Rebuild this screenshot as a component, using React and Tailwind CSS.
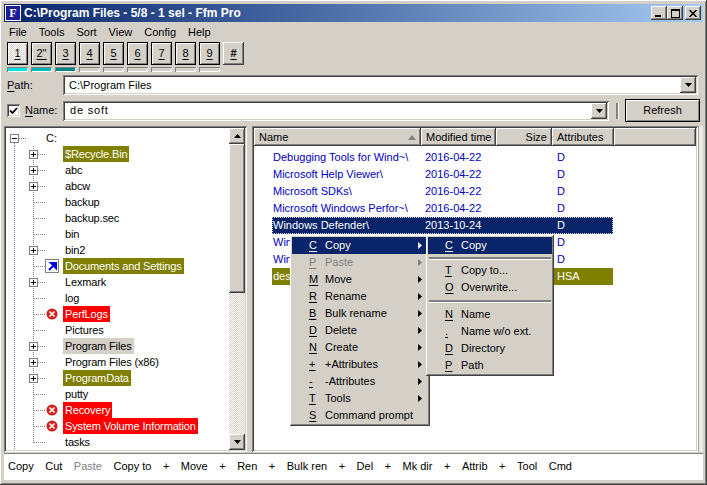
import React from "react";

const raised = "shadow-[inset_-1px_-1px_#404040,inset_1px_1px_#ffffff,inset_-2px_-2px_#808080,inset_2px_2px_#d4d0c8]";
const sunken = "shadow-[inset_1px_1px_#808080,inset_-1px_-1px_#ffffff,inset_2px_2px_#404040,inset_-2px_-2px_#d4d0c8]";
const dither = "repeating-conic-gradient(#ffffff 0% 25%, #d4d0c8 0% 50%)";

const U = ({ children }) => <span className="underline underline-offset-2">{children}</span>;

function ArrowDown() {
  return (
    <svg width="7" height="4" viewBox="0 0 7 4"><path d="M0 0h7L3.5 4z" fill="#000" /></svg>
  );
}

function ScrollBtn({ up, className = "" }) {
  return (
    <div className={`w-[16px] h-[16px] bg-[#d4d0c8] flex items-center justify-center ${raised} ${className}`}>
      <svg width="7" height="4" viewBox="0 0 7 4" className={up ? "rotate-180" : ""}><path d="M0 0h7L3.5 4z" fill="#000" /></svg>
    </div>
  );
}

const numbers = [
  ["1", "#00e4e4"], ["2\"", "#00b8b8"], ["3", "#008484"], ["4"], ["5"], ["6"], ["7"], ["8"], ["9"],
];

function NumBtn({ label, color, first }) {
  return (
    <div className="flex flex-col items-center w-[21px] gap-[2px]">
      <div
        className={`w-[21px] h-[23px] border border-black flex items-center justify-center ${first ? "" : "bg-[#d4d0c8]"} shadow-[inset_1px_1px_#ffffff,inset_-1px_-1px_#808080]`}
        style={first ? { background: dither, backgroundSize: "2px 2px" } : undefined}
      >
        <span className="underline underline-offset-2">{label}</span>
      </div>
      <div
        className="w-[21px] h-[5px] shadow-[inset_1px_1px_#808080,inset_-1px_-1px_#ffffff]"
        style={color ? { background: color } : undefined}
      />
    </div>
  );
}

function TreeGlyph({ kind, icon, first, last }) {
  return (
    <svg width="57" height="16" viewBox="2 0 57 16" className="shrink-0">
      {!first && <path d="M10.5 0V16" stroke="#808080" strokeDasharray="1 1" />}
      {first && <path d="M10.5 13V16" stroke="#808080" strokeDasharray="1 1" />}
      {!first && <path d={`M29.5 0V${last ? 9 : 16}`} stroke="#808080" strokeDasharray="1 1" />}
      {first ? (
        <path d="M15 8.5H23" stroke="#808080" strokeDasharray="1 1" />
      ) : (
        <path d="M30 8.5H41" stroke="#808080" strokeDasharray="1 1" />
      )}
      {first && (
        <g>
          <rect x="6.5" y="4.5" width="8" height="8" fill="#fff" stroke="#808080" />
          <path d="M8 8.5h5" stroke="#000" />
        </g>
      )}
      {kind === "plus" && (
        <g>
          <rect x="25.5" y="4.5" width="8" height="8" fill="#fff" stroke="#808080" />
          <path d="M27 8.5h5M29.5 6v5" stroke="#000" />
        </g>
      )}
      {icon === "link" && (
        <g>
          <rect x="41.5" y="1.5" width="13" height="13" fill="#fff" stroke="#808080" />
          <path d="M45 12L51 6M47 5h5v5z" stroke="#0000e0" strokeWidth="2" fill="#0000e0" />
        </g>
      )}
      {icon === "err" && (
        <g>
          <circle cx="48" cy="8" r="5.5" fill="#d81e1e" />
          <path d="M45.5 5.5l5 5M50.5 5.5l-5 5" stroke="#fff" strokeWidth="1.6" />
        </g>
      )}
    </svg>
  );
}

const tree = [
  { t: "$Recycle.Bin", k: "plus", c: "o" },
  { t: "abc", k: "plus" },
  { t: "abcw", k: "plus" },
  { t: "backup" },
  { t: "backup.sec" },
  { t: "bin" },
  { t: "bin2", k: "plus" },
  { t: "Documents and Settings", i: "link", c: "o" },
  { t: "Lexmark", k: "plus" },
  { t: "log" },
  { t: "PerfLogs", i: "err", c: "r" },
  { t: "Pictures" },
  { t: "Program Files", k: "plus", c: "g" },
  { t: "Program Files (x86)", k: "plus" },
  { t: "ProgramData", k: "plus", c: "o" },
  { t: "putty" },
  { t: "Recovery", i: "err", c: "r" },
  { t: "System Volume Information", i: "err", c: "r" },
  { t: "tasks", last: true },
];

const chip = {
  o: "bg-[#808000] text-white",
  r: "bg-[#ff0000] text-white",
  g: "bg-[#d4d0c8] text-black",
};

function TreeRow({ row }) {
  return (
    <div className="flex h-4 items-center whitespace-nowrap tracking-[-0.15px]">
      <TreeGlyph kind={row.k} icon={row.i} last={row.last} />
      <span className={`h-4 leading-4 px-[2px] ${row.c ? chip[row.c] : "text-black"}`}>{row.t}</span>
    </div>
  );
}

const files = [
  ["Debugging Tools for Wind~\\", "2016-04-22", "D"],
  ["Microsoft Help Viewer\\", "2016-04-22", "D"],
  ["Microsoft SDKs\\", "2016-04-22", "D"],
  ["Microsoft Windows Perfor~\\", "2016-04-22", "D"],
  ["Windows Defender\\", "2013-10-24", "D", "sel"],
  ["Windows Mail\\", "2016-04-22", "D"],
  ["Windows Photo Viewer\\", "2016-04-22", "D"],
  ["desktop.ini", "2016-04-22", "HSA", "olive"],
];

function FileRow({ f }) {
  const style =
    f[3] === "sel"
      ? "bg-[#0a246a] text-white outline-1 outline-dotted -outline-offset-1 outline-[#d4d0c8]"
      : f[3] === "olive"
      ? "bg-[#808000] text-white"
      : "text-[#0000c0]";
  return (
    <div className={`ml-[18px] w-[341px] h-[17px] leading-[17px] flex whitespace-nowrap ${style}`}>
      <span className="w-[152px] pl-[1px] overflow-hidden">{f[0]}</span>
      <span className="w-[132px] pl-[1px]">{f[1]}</span>
      <span className="pl-[1px]">{f[2]}</span>
    </div>
  );
}

function Head({ w, children, right, sort }) {
  return (
    <div className={`${w} h-[18px] bg-[#d4d0c8] ${raised} flex items-center px-[5px] shrink-0 whitespace-nowrap ${right ? "justify-end" : "justify-between"}`}>
      <span>{children}</span>
      {sort && (
        <svg width="8" height="5" viewBox="0 0 8 5"><path d="M0 5L4 0l4 5z" fill="#808080" /></svg>
      )}
    </div>
  );
}

function MenuArrow({ dim }) {
  return (
    <svg width="4" height="7" viewBox="0 0 4 7" className="absolute right-[6px] top-[5px]">
      <path d="M0 0l4 3.5L0 7z" fill={dim ? "#808080" : "currentColor"} />
    </svg>
  );
}

function MenuItem({ k, t, arrow, active, dim }) {
  return (
    <div
      className={`relative h-[17px] leading-[17px] flex whitespace-nowrap pl-[17px] ${active ? "bg-[#0a246a] text-white" : dim ? "text-[#808080]" : "text-black"}`}
    >
      <span className="w-[16px] shrink-0"><span className="underline underline-offset-2">{k}</span></span>
      <span>{t}</span>
      {arrow && <MenuArrow dim={dim} />}
    </div>
  );
}

const Sep = ({ wide }) => <div className={`h-[2px] mx-[1px] bg-[#808080] shadow-[0_1px_#ffffff] ${wide ? "mt-[4px] mb-[4px]" : "my-[3px]"}`} />;

const mainMenu = [
  ["C", "Copy", true, "active"],
  ["P", "Paste", true, "dim"],
  ["M", "Move", true],
  ["R", "Rename", true],
  ["B", "Bulk rename", true],
  ["D", "Delete", true],
  ["N", "Create", true],
  ["+", "+Attributes", true],
  ["-", "-Attributes", true],
  ["T", "Tools", true],
  ["S", "Command prompt", false],
];

const bottom = ["Copy", "Cut", "Paste", "Copy to", "+", "Move", "+", "Ren", "+", "Bulk ren", "+", "Del", "+", "Mk dir", "+", "Attrib", "+", "Tool", "Cmd"];

export default function App() {
  return (
    <div
      className={`relative w-[707px] h-[485px] bg-[#d4d0c8] p-[4px] flex flex-col overflow-hidden text-black text-[11px] ${raised}`}
      style={{ fontFamily: '"Liberation Sans", sans-serif' }}
    >
      {/* title */}
      <div className="h-[18px] flex items-center bg-gradient-to-r from-[#0a246a] to-[#a6caf0] shrink-0 pr-[2px]">
        <div className="w-[16px] h-[16px] ml-[1px] mr-[3px] bg-[#1c1c9c] border border-white flex items-center justify-center">
          <span className="text-white font-bold text-[12px] leading-none" style={{ fontFamily: '"Liberation Serif", serif' }}>F</span>
        </div>
        <span className="text-white font-bold text-[12px] whitespace-nowrap">C:\Program Files - 5/8 - 1 sel - Ffm Pro</span>
        <div className="ml-auto flex">
          <div className={`w-[16px] h-[14px] bg-[#d4d0c8] ${raised} flex items-end justify-start pl-[4px] pb-[3px]`}>
            <div className="w-[6px] h-[2px] bg-black" />
          </div>
          <div className={`w-[16px] h-[14px] bg-[#d4d0c8] ${raised} flex items-center justify-center`}>
            <div className="w-[9px] h-[9px] border border-black border-t-2" />
          </div>
          <div className={`ml-[2px] w-[16px] h-[14px] bg-[#d4d0c8] ${raised} flex items-center justify-center`}>
            <svg width="8" height="7" viewBox="0 0 8 7"><path d="M0.5 0L7.5 7M7.5 0L0.5 7" stroke="#000" strokeWidth="1.5" /></svg>
          </div>
        </div>
      </div>

      {/* menu */}
      <div className="h-[20px] flex items-center gap-[12px] pl-[5px] shrink-0">
        {["File", "Tools", "Sort", "View", "Config", "Help"].map((m) => (
          <span key={m}>{m}</span>
        ))}
      </div>

      {/* number buttons */}
      <div className="h-[30px] flex gap-[3px] pl-[3px] shrink-0">
        {numbers.map((n, i) => (
          <NumBtn key={n[0]} label={n[0]} color={n[1]} first={i === 0} />
        ))}
        <div className={`w-[21px] h-[23px] bg-[#d4d0c8] flex items-center justify-center ${raised} font-bold`}>
          <span className="underline underline-offset-2">#</span>
        </div>
      </div>

      {/* path */}
      <div className="mt-[3px] h-[20px] flex items-center shrink-0 pl-[3px]">
        <span className="w-[56px]"><U>P</U>ath:</span>
        <div className={`w-[635px] h-[20px] bg-white flex items-center justify-between pl-[6px] pr-[2px] ${sunken}`}>
          <span>C:\Program Files</span>
          <div className={`w-[16px] h-[16px] bg-[#d4d0c8] flex items-center justify-center ${raised}`}><ArrowDown /></div>
        </div>
      </div>

      {/* name */}
      <div className="mt-[5px] h-[21px] flex items-center shrink-0 pl-[3px]">
        <div className={`w-[13px] h-[13px] bg-white flex items-center justify-center mr-[5px] ${sunken}`}>
          <svg width="9" height="8" viewBox="0 0 9 8"><path d="M1 3.5l2.5 2.5L8 1" stroke="#000" strokeWidth="1.8" fill="none" /></svg>
        </div>
        <span className="w-[38px]"><U>N</U>ame:</span>
        <div className={`w-[546px] h-[20px] bg-white flex items-center justify-between pl-[7px] pr-[2px] ${sunken}`}>
          <span className="tracking-[0.8px]">de soft</span>
          <div className={`w-[16px] h-[16px] bg-[#d4d0c8] flex items-center justify-center ${raised}`}><ArrowDown /></div>
        </div>
        <div className="w-[2px] h-[16px] ml-[7px] mr-[7px] bg-[#808080] shadow-[1px_0_#ffffff]" />
        <div className="w-[75px] h-[23px] border border-black bg-[#d4d0c8] flex items-center justify-center shadow-[inset_1px_1px_#ffffff,inset_-1px_-1px_#808080]">
          Refresh
        </div>
      </div>

      {/* panes */}
      <div className="mt-[5px] h-[326px] flex shrink-0">
        {/* tree */}
        <div className={`w-[243px] h-full bg-white p-[2px] flex mr-[5px] ${sunken}`}>
          <div className="flex-1 overflow-hidden">
            <div className="flex h-4 items-center mt-[2px] whitespace-nowrap">
              <TreeGlyph first />
              <span className="leading-4 -ml-[17px]">C:</span>
            </div>
            {tree.map((r) => (
              <TreeRow key={r.t} row={r} />
            ))}
          </div>
          <div className="w-[16px] h-full flex flex-col" style={{ background: dither, backgroundSize: "2px 2px" }}>
            <ScrollBtn up />
            <div className={`h-[149px] w-[16px] bg-[#d4d0c8] ${raised}`} />
            <ScrollBtn className="mt-auto" />
          </div>
        </div>

        {/* list */}
        <div className={`w-[446px] h-full bg-white p-[2px] ${sunken}`}>
          <div className="flex">
            <Head w="w-[167px]" sort>Name</Head>
            <Head w="w-[75px]">Modified time</Head>
            <Head w="w-[56px]" right>Size</Head>
            <Head w="w-[62px]">Attributes</Head>
            <Head w="flex-1"></Head>
          </div>
          <div className="mt-[3px]">
            {files.map((f) => (
              <FileRow key={f[0]} f={f} />
            ))}
          </div>
        </div>
        {/* narrow empty strip right of the list */}
        <div className="w-[5px] h-full border-l border-[#a0a0a0] bg-[#ecebe6]" />
      </div>

      {/* bottom */}
      <div className="mt-[1px] h-[27px] pb-[1px] border-t border-[#808080] shadow-[inset_0_1px_#ffffff] bg-white flex items-center pl-[4px] whitespace-nowrap gap-[11.5px]">
        {bottom.map((b, i) => (
          <span key={i} className={b === "Paste" ? "text-[#808080]" : ""}>{b}</span>
        ))}
      </div>

      {/* context menu */}
      <div className={`absolute left-[290px] top-[235px] w-[140px] bg-[#d4d0c8] p-[2px] ${raised}`}>
        {mainMenu.map((m) => (
          <MenuItem key={m[1]} k={m[0]} t={m[1]} arrow={m[2]} active={m[3] === "active"} dim={m[3] === "dim"} />
        ))}
      </div>

      {/* submenu */}
      <div className={`absolute left-[426px] top-[235px] w-[128px] bg-[#d4d0c8] p-[2px] ${raised}`}>
        <MenuItem k="C" t="Copy" active />
        <Sep />
        <MenuItem k="T" t="Copy to..." />
        <MenuItem k="O" t="Overwrite..." />
        <Sep wide />
        <MenuItem k="N" t="Name" />
        <MenuItem k="." t="Name w/o ext." />
        <MenuItem k="D" t="Directory" />
        <MenuItem k="P" t="Path" />
      </div>
    </div>
  );
}
